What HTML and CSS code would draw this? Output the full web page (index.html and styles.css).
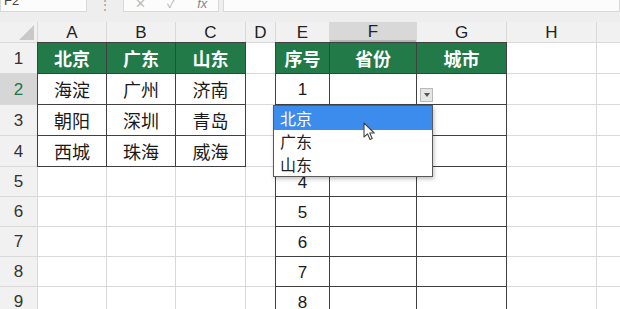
FILE: index.html
```
<!DOCTYPE html>
<html lang="zh">
<head>
    <meta charset="UTF-8">
    <title>省份下拉</title>
    <link rel="stylesheet" href="styles.css">
</head>
<body>
    <!-- formula bar, mostly scrolled off the top -->
    <div class="formula-bar">
        <div class="name-box"><span>F2</span></div>
        <div class="dots">⋮</div>
        <div class="fx-box"><span>✕</span><span>✓</span><span class="fx">fx</span></div>
        <div class="formula-input"></div>
    </div>

    <div class="sheet">
        <!-- column headers -->
        <div class="corner"><span class="tri"></span></div>
        <div class="ch">A</div><div class="ch">B</div><div class="ch">C</div><div class="ch">D</div>
        <div class="ch">E</div><div class="ch sel">F</div><div class="ch">G</div><div class="ch">H</div><div class="ch"></div>

        <!-- row 1 -->
        <div class="rh">1</div>
        <div class="c b head">北京</div><div class="c b head">广东</div><div class="c b head">山东</div><div class="c"></div>
        <div class="c b head">序号</div><div class="c b head">省份</div><div class="c b head">城市</div><div class="c"></div><div class="c"></div>

        <!-- row 2 -->
        <div class="rh sel">2</div>
        <div class="c b">海淀</div><div class="c b">广州</div><div class="c b">济南</div><div class="c"></div>
        <div class="c b num">1</div><div class="c b"></div><div class="c b"></div><div class="c"></div><div class="c"></div>

        <!-- rows 3-4: E is hidden under the open list -->
        <div class="rh">3</div>
        <div class="c b">朝阳</div><div class="c b">深圳</div><div class="c b">青岛</div><div class="c"></div>
        <div class="c b num"></div><div class="c b"></div><div class="c b"></div><div class="c"></div><div class="c"></div>

        <div class="rh">4</div>
        <div class="c b">西城</div><div class="c b">珠海</div><div class="c b">威海</div><div class="c"></div>
        <div class="c b num"></div><div class="c b"></div><div class="c b"></div><div class="c"></div><div class="c"></div>

        <div class="rh">5</div>
        <div class="c"></div><div class="c"></div><div class="c"></div><div class="c"></div>
        <div class="c b num">4</div><div class="c b"></div><div class="c b"></div><div class="c"></div><div class="c"></div>

        <div class="rh">6</div>
        <div class="c"></div><div class="c"></div><div class="c"></div><div class="c"></div>
        <div class="c b num">5</div><div class="c b"></div><div class="c b"></div><div class="c"></div><div class="c"></div>

        <div class="rh">7</div>
        <div class="c"></div><div class="c"></div><div class="c"></div><div class="c"></div>
        <div class="c b num">6</div><div class="c b"></div><div class="c b"></div><div class="c"></div><div class="c"></div>

        <div class="rh">8</div>
        <div class="c"></div><div class="c"></div><div class="c"></div><div class="c"></div>
        <div class="c b num">7</div><div class="c b"></div><div class="c b"></div><div class="c"></div><div class="c"></div>

        <div class="rh">9</div>
        <div class="c"></div><div class="c"></div><div class="c"></div><div class="c"></div>
        <div class="c b num">8</div><div class="c b"></div><div class="c b"></div><div class="c"></div><div class="c"></div>

        <!-- validation arrow + open list -->
        <div class="drop-btn"><span></span></div>
        <ul class="drop-list">
            <li class="hover">北京</li>
            <li>广东</li>
            <li>山东</li>
        </ul>
        <svg class="cursor" width="13" height="19" viewBox="0 0 13 19">
            <path d="M1 1 L1 15 L4.5 11.8 L7 17.5 L9.2 16.5 L6.8 11 L11.2 11 Z" fill="#fff" stroke="#444" stroke-width="1.1" stroke-linejoin="round"/>
        </svg>
    </div>
</body>
</html>
```

FILE: styles.css
```
* {
    box-sizing: border-box;
}

body {
    margin: 0;
    background: #eeeeee;
    font-family: 'Liberation Sans', Arial, 'Noto Sans CJK SC', sans-serif;
    color: #222;
    overflow: hidden;
    height: 309px;
}

/* formula bar */
.formula-bar {
    display: flex;
    align-items: flex-end;
    height: 12px;
    margin-bottom: 10px;
    overflow: hidden;
}

.name-box,
.fx-box,
.formula-input {
    height: 26px;
    background: #fcfcfc;
    border: 1px solid #d8d8d8;
    border-top: none;
    display: flex;
    align-items: flex-end;
    font-size: 13px;
    color: #444;
}

.name-box {
    width: 87px;
    padding: 0 0 0 3px;
    line-height: 18px;
}

.name-box span {
    margin-bottom: 1px;
}

.dots {
    width: 36px;
    text-align: center;
    color: #999;
    font-size: 12px;
    line-height: 14px;
}

.fx-box {
    width: 96px;
    justify-content: space-around;
    color: #bbb;
    line-height: 14px;
}

.fx {
    font-style: italic;
    color: #888;
}

.formula-input {
    flex: 1;
    margin-left: 4px;
}

/* grid */
.sheet {
    position: relative;
    display: grid;
    grid-template-columns: 37px 68px 68px 69px 29px 53px 86px 89px 89px 1fr;
    grid-template-rows: 20px 30px 30px 30px 30px 29px 29px 29px 29px 29px;
    gap: 1px;
    background: #d9d9d9;
}

.corner,
.ch,
.rh {
    background: #f1f1f1;
    display: flex;
    align-items: center;
    justify-content: center;
    font-size: 17px;
    color: #222;
}

.corner {
    position: relative;
}

.corner .tri {
    position: absolute;
    right: 3px;
    bottom: 2px;
    width: 0;
    height: 0;
    border-left: 15px solid transparent;
    border-bottom: 15px solid #c9c9c9;
}

.ch {
    padding-top: 1px;
}

.ch.sel {
    background: #d8d8d8;
    border-bottom: 2px solid #b5b5b5;
}

.rh {
    color: #333;
    padding-top: 1px;
}

.rh.sel {
    background: #d6d6d6;
    color: #217346;
}

.c {
    background: #fff;
    display: flex;
    align-items: center;
    justify-content: center;
    font-family: 'Noto Sans CJK SC', 'Liberation Sans', sans-serif;
    font-size: 18px;
    color: #1a1a1a;
}

.c.b {
    outline: 1px solid #404040;
}

.c.head {
    background: #217a48;
    color: #fff;
    font-weight: bold;
}

.c.num {
    font-family: 'Liberation Sans', Arial, sans-serif;
    font-size: 17px;
    padding-top: 2px;
}

/* data validation dropdown */
.drop-btn {
    position: absolute;
    left: 420px;
    top: 66px;
    width: 13px;
    height: 14px;
    background: #e6e6e6;
    border: 1px solid #b9b9b9;
    display: flex;
    align-items: center;
    justify-content: center;
}

.drop-btn span {
    width: 0;
    height: 0;
    border-left: 3px solid transparent;
    border-right: 3px solid transparent;
    border-top: 4px solid #555;
}

.drop-list {
    position: absolute;
    left: 273px;
    top: 83px;
    width: 160px;
    margin: 0;
    padding: 0;
    list-style: none;
    background: #fff;
    border: 1px solid #5a5a5a;
    box-shadow: 1px 2px 4px rgba(0,0,0,0.25);
    font-family: 'Noto Sans CJK SC', sans-serif;
    font-size: 16px;
    color: #222;
}

.drop-list li {
    height: 23px;
    line-height: 23px;
    padding-left: 6px;
}

.drop-list li.hover {
    height: 24px;
    line-height: 25px;
    background: #3b8ced;
    color: #fff;
}

.cursor {
    position: absolute;
    left: 363px;
    top: 100px;
}
```
